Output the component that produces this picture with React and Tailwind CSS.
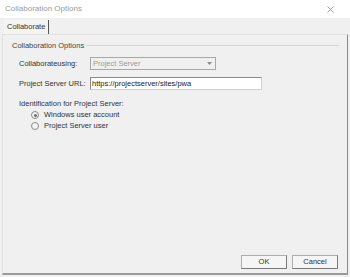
import React from 'react';

const font = { fontFamily: '"Liberation Sans", Arial, sans-serif' };

function Radio({ checked, label }) {
  return (
    <div className="flex h-[11px] items-center gap-[5px]">
      <span className="flex h-[8px] w-[8px] items-center justify-center rounded-full border border-[#8a8a8a] bg-[#f4f4f4]">
        {checked && <span className="h-[3px] w-[3px] rounded-full bg-[#6a6a6a]" />}
      </span>
      <span>{label}</span>
    </div>
  );
}

export default function App() {
  return (
    <div className="flex h-[277px] w-[350px] flex-col bg-[#f0f0f0] text-[7.5px] text-[#333]" style={font}>
      <div className="flex h-[18px] shrink-0 items-center justify-between bg-white pl-[5px] pr-[16px]">
        <span className="text-[8px] text-[#9a9a9a]">Collaboration Options</span>
        <svg width="7" height="7" viewBox="0 0 7 7" className="text-[#8a8a8a]">
          <path d="M0.5 0.5 L6.5 6.5 M6.5 0.5 L0.5 6.5" stroke="currentColor" strokeWidth="0.8" />
        </svg>
      </div>

      <div className="flex shrink-0 pl-[4px] pt-[2px]">
        <div className="flex h-[14px] items-center border-r border-[#555] bg-[#f4f4f4] pl-[3px] pr-[3px] text-[#333]">
          Collaborate
        </div>
      </div>

      <div className="mx-[2px] mb-[2px] flex flex-1 flex-col border-l border-t border-r-[1.5px] border-b-[2px] border-l-[#e2e2e2] border-t-[#e2e2e2] border-r-[#8a8a8a] border-b-[#9a9a9a] pl-[9px] pr-[8px]">
        <div className="mt-[5px] flex items-center gap-[2px]">
          <span className="text-[#444]">Collaboration Options</span>
          <span className="h-px flex-1 bg-[#d6d6d6]" />
        </div>

        <div className="ml-[7px] mt-[6px] flex items-center">
          <span className="w-[71px]">Collaborateusing:</span>
          <div className="flex h-[13px] w-[126px] items-center justify-between border border-[#a8a8a8] bg-[#f0f0f0] pl-[2px] pr-[3px] text-[#9a9a9a]">
            <span>Project Server</span>
            <svg width="5" height="3" viewBox="0 0 5 3">
              <path d="M0 0 L5 0 L2.5 3 Z" fill="#8a8a8a" />
            </svg>
          </div>
        </div>

        <div className="ml-[7px] mt-[7px] flex items-center">
          <span className="w-[71px]">Project Server URL:</span>
          <div className="flex h-[13px] w-[172px] items-center border border-[#8a8a8a] border-b-[#d0d0d0] border-r-[#d0d0d0] bg-white pl-[1px] text-[#222]">
            https://projectserver/sites/pwa
          </div>
        </div>

        <div className="ml-[7px] mt-[8px]">Identification for Project Server:</div>
        <div className="ml-[19px] flex flex-col">
          <Radio checked label="Windows user account" />
          <Radio label="Project Server user" />
        </div>

        <div className="mt-auto mb-[4px] flex justify-end gap-[5px] pr-[1px]">
          <button className="flex h-[14px] w-[46px] items-center justify-center border border-[#adadad] border-b-[#7a7a7a] border-r-[#7a7a7a] bg-[#f5f5f5] text-[#333]">
            OK
          </button>
          <button className="flex h-[14px] w-[46px] items-center justify-center border border-[#adadad] border-b-[#7a7a7a] border-r-[#7a7a7a] bg-[#f5f5f5] text-[#333]">
            Cancel
          </button>
        </div>
      </div>
    </div>
  );
}
